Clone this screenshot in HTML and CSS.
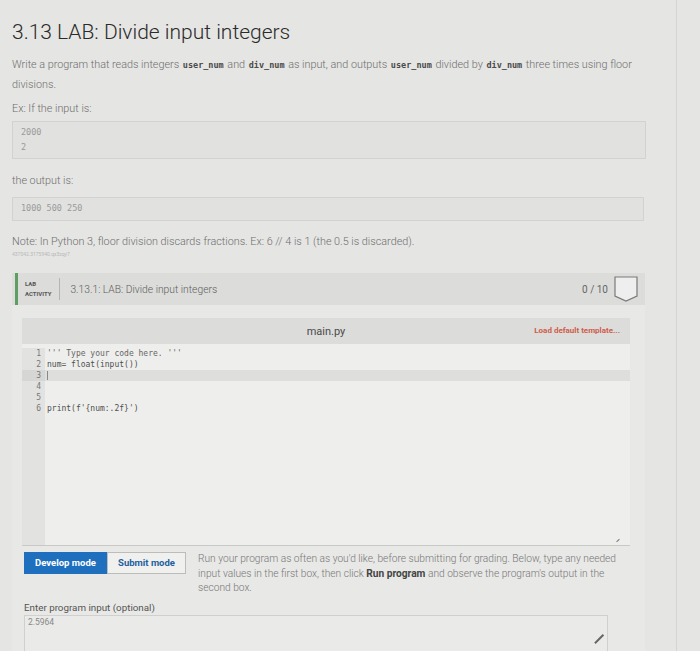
FILE: index.html
```html
<!DOCTYPE html>
<html>
<head>
<meta charset="utf-8">
<link rel="stylesheet" href="styles.css">
</head>
<body>
<div class="page">
  <h1 class="title">3.13 LAB: Divide input integers</h1>
  <p class="para first">Write a program that reads integers <code class="ic">user_num</code> and <code class="ic">div_num</code> as input, and outputs <code class="ic">user_num</code> divided by <code class="ic">div_num</code> three times using floor divisions.</p>
  <p class="para ex">Ex: If the input is:</p>
  <pre class="sample in">2000
2</pre>
  <p class="para out-label">the output is:</p>
  <pre class="sample out">1000 500 250</pre>
  <p class="para note">Note: In Python 3, floor division discards fractions. Ex: 6 // 4 is 1 (the 0.5 is discarded).</p>
  <div class="tiny-id">437042.3175940.qx3zqy7</div>

  <div class="lab-bar">
    <div class="green"></div>
    <div class="lab-tag"><span>LAB</span><span>ACTIVITY</span></div>
    <div class="lab-div"></div>
    <div class="lab-name">3.13.1: LAB: Divide input integers</div>
    <div class="score">0 / 10</div>
    <svg class="shield" width="24" height="26" viewBox="0 0 24 26"><path d="M1 1 H23 V20 L12 25 L1 20 Z" fill="#eeeeee" stroke="#7a7a7a" stroke-width="1.2"/></svg>
  </div>

  <div class="lab-body">
    <div class="editor">
      <div class="ed-head">
        <span class="fname">main.py</span>
        <span class="load">Load default template...</span>
      </div>
      <div class="code">
        <div class="line"><span class="ln">1</span><span class="tx str">''' Type your code here. '''</span></div>
        <div class="line"><span class="ln">2</span><span class="tx">num= float(input())</span></div>
        <div class="line active"><span class="ln">3</span><span class="tx"><span class="caret"></span></span></div>
        <div class="line"><span class="ln">4</span><span class="tx"></span></div>
        <div class="line"><span class="ln">5</span><span class="tx"></span></div>
        <div class="line"><span class="ln">6</span><span class="tx">print(f'{num:.2f}')</span></div>
        <div class="filler"><span class="ln"></span></div>
        <span class="grip"></span>
      </div>
    </div>

    <div class="run-row">
      <div class="modes">
        <span class="mode dev">Develop mode</span>
        <span class="mode sub">Submit mode</span>
      </div>
      <p class="run-text">Run your program as often as you'd like, before submitting for grading. Below, type any needed input values in the first box, then click <b>Run program</b> and observe the program's output in the second box.</p>
    </div>

    <div class="in-label">Enter program input (optional)</div>
    <div class="in-box">2.5964<span class="grip2"></span></div>
  </div>
</div>
<div class="edge"></div>
</body>
</html>
```
FILE: styles.css
```css
html, body {
  margin: 0;
  padding: 0;
}
body {
  background: #e5e5e3;
  font-family: Roboto, "Liberation Sans", sans-serif;
  color: #555;
  width: 700px;
  height: 651px;
  overflow: hidden;
  position: relative;
}
.page {
  padding: 0 54px 0 12px;
}
.title {
  margin: 0;
  padding-top: 17px;
  font-size: 21px;
  line-height: 30px;
  font-weight: 300;
  color: #2a2a2a;
}
.para {
  margin: 0;
  font-size: 10.8px;
  line-height: 20px;
  color: #6e6e6e;
  font-weight: 300;
}
.para.first {
  margin-top: 8px;
}
.ic {
  display: inline-block;
  font-family: "DejaVu Sans Mono", monospace;
  font-size: 8.5px;
  font-weight: bold;
  line-height: 10px;
  color: #4a4a4a;
  margin: 0 1px;
}
.ex {
  margin-top: 4px;
}
.sample {
  margin: 0;
  background: #e1e1df;
  border: 1px solid #d2d2d0;
  font-family: "DejaVu Sans Mono", monospace;
  font-size: 8.5px;
  line-height: 15px;
  color: #9a9a9a;
  padding: 3px 8px;
  width: 616px;
}
.sample.in {
  margin-top: 2px;
}
.sample.out {
  margin-top: 6px;
  width: 614px;
  padding: 3px 8px 4px;
}
.out-label {
  margin-top: 12px;
}
.note {
  margin-top: 11px;
}
.tiny-id {
  font-size: 5px;
  color: #b8b8b8;
  line-height: 8px;
  margin-top: -2px;
}
.lab-bar {
  margin-top: 15px;
  height: 32px;
  width: 633px;
  background: #dcdcda;
  display: flex;
  align-items: center;
  position: relative;
}
.green {
  width: 3px;
  height: 32px;
  background: #5e9e62;
  margin-left: 3px;
}
.lab-tag {
  display: flex;
  flex-direction: column;
  font-size: 6px;
  font-weight: bold;
  line-height: 10px;
  color: #555;
  margin-left: 7px;
}
.lab-div {
  width: 1px;
  height: 22px;
  background: #b5b5b5;
  margin-left: 8px;
}
.lab-name {
  font-size: 10.3px;
  font-weight: 300;
  color: #5c5c5c;
  margin-left: 10px;
  flex: 1;
}
.score {
  font-size: 10px;
  color: #666;
  margin-right: 6px;
}
.shield {
  margin-right: 7px;
}
.lab-body {
  width: 633px;
  background: #e8e8e6;
  padding: 13px 0 0 10px;
  box-sizing: border-box;
}
.editor {
  width: 608px;
}
.ed-head {
  height: 26px;
  background: #dcdcda;
  position: relative;
  display: flex;
  align-items: center;
  justify-content: center;
}
.fname {
  font-size: 11px;
  color: #4a4a4a;
}
.load {
  position: absolute;
  right: 10px;
  top: 8px;
  font-size: 8px;
  font-weight: bold;
  color: #cf5c4a;
}
.code {
  background: #eeeeec;
  border-bottom: 1px solid #c8c8c6;
  height: 202px;
  position: relative;
  font-family: "DejaVu Sans Mono", monospace;
  font-size: 8px;
  color: #4e4e4e;
  padding-top: 4px;
  box-sizing: border-box;
  display: flex;
  flex-direction: column;
}
.line {
  display: flex;
  height: 11px;
  line-height: 11px;
}
.line.active {
  background: #dededc;
}
.ln {
  width: 19px;
  text-align: right;
  padding-right: 4px;
  color: #777;
  background: #e2e2e0;
  flex: none;
}
.line.active .ln {
  background: #d6d6d4;
}
.tx {
  white-space: pre;
  padding-left: 2px;
}
.str {
  color: #666;
}
.caret {
  display: inline-block;
  width: 1px;
  height: 9px;
  background: #888;
  vertical-align: middle;
}
.filler {
  flex: 1;
  display: flex;
}
.filler .ln {
  padding: 0;
  width: 23px;
}
.grip {
  position: absolute;
  right: 10px;
  bottom: 4px;
  width: 4px;
  height: 1px;
  background: #777;
  transform: rotate(-45deg);
}
.run-row {
  display: flex;
  align-items: flex-start;
  margin-top: 6px;
}
.modes {
  display: flex;
  flex: none;
  margin-left: 2px;
}
.mode {
  display: inline-block;
  font-size: 9.5px;
  font-weight: bold;
  height: 22px;
  line-height: 22px;
  box-sizing: border-box;
}
.dev {
  background: #1f6fbf;
  color: #ffffff;
  width: 83px;
  text-align: center;
}
.sub {
  background: #f0f0ee;
  color: #23609f;
  border: 1px solid #bcbcba;
  width: 79px;
  text-align: center;
  line-height: 20px;
}
.run-text {
  margin: 0 0 0 12px;
  font-size: 10.2px;
  line-height: 14.5px;
  color: #777;
  font-weight: 300;
  width: 422px;
}
.run-text b {
  color: #444;
  font-weight: bold;
}
.in-label {
  margin-top: 6px;
  margin-left: 2px;
  font-size: 9.8px;
  color: #555;
}
.in-box {
  margin-top: 2px;
  margin-left: 2px;
  width: 584px;
  height: 40px;
  box-sizing: border-box;
  border: 1px solid #d0d0ce;
  background: #eaeae8;
  font-size: 8.5px;
  color: #888;
  padding: 1px 3px;
  position: relative;
}
.grip2 {
  position: absolute;
  right: 2px;
  bottom: 14px;
  width: 12px;
  height: 1.5px;
  background: #666;
  transform: rotate(-45deg);
}
.edge {
  position: absolute;
  left: 676px;
  top: 0;
  width: 1px;
  height: 651px;
  background: #d4d4d2;
}
```
